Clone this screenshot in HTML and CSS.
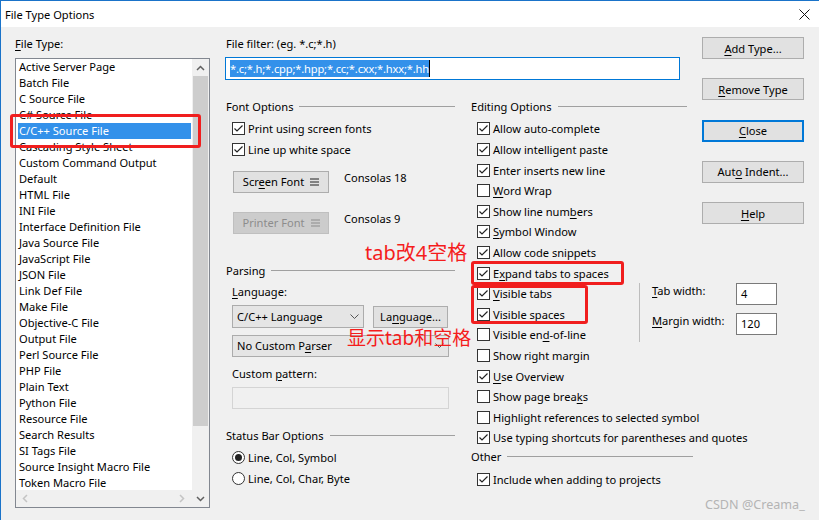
FILE: index.html
```html
<!DOCTYPE html>
<html lang="en">
<head>
    <meta charset="UTF-8">
    <title>File Type Options</title>
    <link rel="stylesheet" href="styles.css">
</head>
<body>

<div class="window">
    <div class="titlebar">
        <span>File Type Options</span>
        <svg class="close-x" width="11" height="11" viewBox="0 0 11 11"><path d="M0.5 0.5L10.5 10.5M10.5 0.5L0.5 10.5" stroke="#111" stroke-width="1"/></svg>
    </div>

    <div class="content">
        <!-- File type list -->
        <div class="types">
            <div class="label"><u>F</u>ile Type:</div>
            <div class="listbox">
                <ul class="items">
                    <li>Active Server Page</li>
                    <li>Batch File</li>
                    <li>C Source File</li>
                    <li>C# Source File</li>
                    <li class="sel">C/C++ Source File</li>
                    <li>Cascading Style Sheet</li>
                    <li>Custom Command Output</li>
                    <li>Default</li>
                    <li>HTML File</li>
                    <li>INI File</li>
                    <li>Interface Definition File</li>
                    <li>Java Source File</li>
                    <li>JavaScript File</li>
                    <li>JSON File</li>
                    <li>Link Def File</li>
                    <li>Make File</li>
                    <li>Objective-C File</li>
                    <li>Output File</li>
                    <li>Perl Source File</li>
                    <li>PHP File</li>
                    <li>Plain Text</li>
                    <li>Python File</li>
                    <li>Resource File</li>
                    <li>Search Results</li>
                    <li>SI Tags File</li>
                    <li>Source Insight Macro File</li>
                    <li>Token Macro File</li>
                </ul>
                <div class="vscroll">
                    <span class="arrow"><svg width="9" height="6" viewBox="0 0 9 6"><path d="M1 5L4.5 1.5L8 5" fill="none" stroke="#606060" stroke-width="1.5"/></svg></span>
                    <span class="thumb"></span>
                    <span class="track"></span>
                    <span class="arrow"><svg width="9" height="6" viewBox="0 0 9 6"><path d="M1 1L4.5 4.5L8 1" fill="none" stroke="#606060" stroke-width="1.5"/></svg></span>
                </div>
                <div class="hscroll">
                    <svg width="6" height="9" viewBox="0 0 6 9"><path d="M5 1L1.5 4.5L5 8" fill="none" stroke="#c4c4c4" stroke-width="1.5"/></svg>
                    <svg width="6" height="9" viewBox="0 0 6 9"><path d="M1 1L4.5 4.5L1 8" fill="none" stroke="#c4c4c4" stroke-width="1.5"/></svg>
                </div>
            </div>
        </div>

        <div class="main">
            <div class="filter">
                <div class="label">File filter: (eg. *.c;*.h)</div>
                <div class="filter-input"><span class="selected">*.c;*.h;*.cpp;*.hpp;*.cc;*.cxx;*.hxx;*.hh</span></div>
            </div>

            <div class="buttons">
                <div class="btn"><span><u>A</u>dd Type...</span></div>
                <div class="btn"><span><u>R</u>emove Type</span></div>
                <div class="btn default"><span><u>C</u>lose</span></div>
                <div class="btn"><span>Aut<u>o</u> Indent...</span></div>
                <div class="btn"><span><u>H</u>elp</span></div>
            </div>

            <!-- Middle column -->
            <div class="col-mid">
                <div class="group">Font Options</div>
                <div class="group-body">
                    <div class="check"><span class="box on"></span>Print using screen fonts</div>
                    <div class="check"><span class="box on"></span>Line up white space</div>
                </div>
                <div class="font-row first">
                    <div class="btn font-btn"><span>Scr<u>e</u>en Font</span><svg width="9" height="8" viewBox="0 0 9 8"><path d="M0 1H9M0 4H9M0 7H9" stroke="#222" stroke-width="1"/></svg></div>
                    <span class="font-name">Consolas 18</span>
                </div>
                <div class="font-row">
                    <div class="btn font-btn disabled"><span>Printer Font</span><svg width="9" height="8" viewBox="0 0 9 8"><path d="M0 1H9M0 4H9M0 7H9" stroke="#8c8c8c" stroke-width="1"/></svg></div>
                    <span class="font-name">Consolas 9</span>
                </div>

                <div class="group parsing">Parsing</div>
                <div class="field-label"><u>L</u>anguage:</div>
                <div class="lang-row">
                    <div class="select lang-select"><span>C/C++ Language</span><svg width="9" height="5" viewBox="0 0 9 5"><path d="M0.5 0.5L4.5 4.5L8.5 0.5" fill="none" stroke="#555" stroke-width="1"/></svg></div>
                    <div class="btn lang-btn"><span>La<u>n</u>guage...</span></div>
                </div>
                <div class="select parser-select"><span>No Custom P<u>a</u>rser</span><svg width="9" height="5" viewBox="0 0 9 5"><path d="M0.5 0.5L4.5 4.5L8.5 0.5" fill="none" stroke="#555" stroke-width="1"/></svg></div>
                <div class="field-label pattern-label">Custom <u>p</u>attern:</div>
                <div class="pattern-input"></div>

                <div class="group status">Status Bar Options</div>
                <div class="radios">
                    <div class="radio"><svg width="13" height="13" viewBox="0 0 13 13"><circle cx="6.5" cy="6.5" r="6" fill="#fff" stroke="#333"/><circle cx="6.5" cy="6.5" r="3.5" fill="#222"/></svg>Line, Col, Symbol</div>
                    <div class="radio"><svg width="13" height="13" viewBox="0 0 13 13"><circle cx="6.5" cy="6.5" r="6" fill="#fff" stroke="#333"/></svg>Line, Col, Char, Byte</div>
                </div>
            </div>

            <!-- Right column -->
            <div class="col-right">
                <div class="group">Editing Options</div>
                <div class="opts">
                    <div class="check"><span class="box on"></span>Allow auto-complete</div>
                    <div class="check"><span class="box on"></span>Allow intelligent paste</div>
                    <div class="check"><span class="box on"></span>Enter inserts new line</div>
                    <div class="check"><span class="box"></span><u>W</u>ord Wrap</div>
                    <div class="check"><span class="box on"></span>Show line num<u>b</u>ers</div>
                    <div class="check"><span class="box on"></span><u>S</u>ymbol Window</div>
                    <div class="check"><span class="box on"></span>Allow code snippets</div>
                    <div class="check"><span class="box on"></span>E<u>x</u>pand tabs to spaces</div>
                    <div class="check narrow"><span class="box on"></span><u>V</u>isible tabs</div>
                    <div class="check narrow"><span class="box on"></span>V<u>i</u>sible spaces</div>
                    <div class="check narrow"><span class="box"></span>Visible en<u>d</u>-of-line</div>
                    <div class="check"><span class="box"></span>Show right margin</div>
                    <div class="check"><span class="box on"></span><u>U</u>se Overview</div>
                    <div class="check"><span class="box"></span>Show page brea<u>k</u>s</div>
                    <div class="check"><span class="box"></span>Highlight references to selected symbol</div>
                    <div class="check"><span class="box on"></span>Use typing shortcuts for parentheses and quotes</div>

                    <div class="widths">
                        <div class="width-row"><span class="width-label"><u>T</u>ab width:</span><span class="num-input">4</span></div>
                        <div class="width-row"><span class="width-label"><u>M</u>argin width:</span><span class="num-input">120</span></div>
                    </div>
                </div>
                <div class="group other">Other</div>
                <div class="check include"><span class="box on"></span>Include when adding to projects</div>
            </div>
        </div>
    </div>

    <!-- Annotations drawn over the screenshot -->
    <div class="mark mark-list"></div>
    <div class="mark mark-expand"></div>
    <div class="mark mark-visible"></div>
    <div class="note note-tab">tab改4空格</div>
    <div class="note note-show">显示tab和空格</div>
    <div class="watermark">CSDN @Creama_</div>
</div>

</body>
</html>
```

FILE: styles.css
```css
* {
    box-sizing: border-box;
}

body {
    margin: 0;
    background: #f0f0f0;
    font-family: "Noto Sans", Arial, sans-serif;
    font-size: 11.1px;
    color: #000;
}

u {
    text-decoration-thickness: 1px;
    text-underline-offset: 2px;
}

.window {
    position: relative;
    width: 819px;
    height: 520px;
    border-left: 1px solid #1a73c9;
    overflow: hidden;
}

.titlebar {
    height: 27px;
    background: #fff;
    border-top: 1px solid #1a73c9;
    display: flex;
    align-items: center;
    justify-content: space-between;
    padding: 0 9px 0 4px;
}

.content {
    display: flex;
    align-items: flex-start;
    padding-left: 14px;
}

.label {
    height: 16px;
    line-height: 16px;
    white-space: nowrap;
}

/* List of file types */
.types {
    width: 195px;
    padding-top: 9px;
}

.listbox {
    margin-top: 6px;
    height: 450px;
    border: 1px solid #828790;
    background: #fff;
    display: grid;
    grid-template-columns: 1fr 17px;
    grid-template-rows: 1fr 17px;
}

.items {
    margin: 0;
    padding: 0;
    list-style: none;
    overflow: hidden;
}

.items li {
    height: 16px;
    line-height: 16px;
    margin: 0 1px 0 2px;
    padding-left: 1px;
    white-space: nowrap;
}

.items li.sel {
    background: #3391ea;
    color: #fff;
}

.vscroll {
    grid-column: 2;
    grid-row: 1 / 3;
    background: #f0f0f0;
    display: flex;
    flex-direction: column;
}

.vscroll .arrow {
    height: 17px;
    display: flex;
    align-items: center;
    justify-content: center;
}

.vscroll .thumb {
    height: 350px;
    margin: 0 1px;
    background: #cdcdcd;
}

.vscroll .track {
    flex: 1;
}

.hscroll {
    grid-column: 1;
    grid-row: 2;
    background: #f0f0f0;
    display: flex;
    align-items: center;
    justify-content: space-between;
    padding: 0 7px 0 6px;
}

/* Main area */
.main {
    margin-left: 15px;
    display: grid;
    grid-template-columns: 230px 217px 102px;
    column-gap: 15px;
    align-items: start;
    align-content: start;
}

.filter {
    grid-column: 1 / 3;
    grid-row: 1;
    padding-top: 9px;
}

.filter .label {
    padding-left: 1px;
}

.filter-input {
    margin-top: 5px;
    width: 455px;
    height: 23px;
    border: 1px solid #0078d7;
    background: #fff;
    padding: 2px 0 0 4px;
}

.filter-input .selected {
    display: inline-block;
    height: 17px;
    line-height: 17px;
    background: #3391ea;
    color: #fff;
    border-right: 1px solid #000;
    letter-spacing: -0.15px;
}

.buttons {
    grid-column: 3;
    grid-row: 1 / 3;
    padding-top: 10px;
    display: flex;
    flex-direction: column;
    gap: 19.3px;
}

.btn {
    height: 22px;
    background: #e1e1e1;
    border: 1px solid #adadad;
    display: flex;
    align-items: center;
    justify-content: center;
    white-space: nowrap;
}

.btn.default {
    border: 2px solid #0078d7;
}

.col-mid,
.col-right {
    grid-row: 2;
    padding-top: 18px;
}

.col-mid {
    grid-column: 1;
}

.col-right {
    grid-column: 2;
}

.group {
    display: flex;
    align-items: center;
    height: 16px;
    padding-left: 1px;
    margin-bottom: 4.7px;
    white-space: nowrap;
}

.group::after {
    content: "";
    flex: 1;
    border-top: 1px solid #a0a0a0;
    margin-left: 6px;
}

.check,
.radio {
    display: flex;
    align-items: center;
    height: 20.6px;
    padding-left: 7px;
    white-space: nowrap;
}

.box {
    width: 13px;
    height: 13px;
    margin-right: 3px;
    border: 1px solid #333;
    background: #fff;
    flex: none;
}

.box.on {
    background: #fff url("data:image/svg+xml,%3Csvg xmlns='http://www.w3.org/2000/svg' width='11' height='11' viewBox='0 0 11 11'%3E%3Cpath d='M1.5 5.5L4 8L9.5 2.5' fill='none' stroke='%23222' stroke-width='1.2'/%3E%3C/svg%3E") no-repeat center;
}

.radio svg {
    margin-right: 3px;
}

.radios {
    margin-top: -0.7px;
}

.radio {
    height: 21px;
}

/* Font buttons */
.font-row {
    display: flex;
    align-items: flex-start;
    margin-top: 19px;
}

.font-row.first {
    margin-top: 11px;
}

.font-btn {
    width: 96px;
    margin-left: 8px;
    gap: 6px;
}

.font-btn.disabled {
    background: #cccccc;
    border-color: #bfbfbf;
    color: #8c8c8c;
}

.font-name {
    margin-left: 15px;
    line-height: 14px;
}

.parsing {
    margin-top: 29px;
    margin-bottom: 0;
}

.field-label {
    height: 16px;
    line-height: 16px;
    margin-top: 5px;
    padding-left: 7px;
}

.lang-row {
    display: flex;
    align-items: flex-start;
    margin-top: 5px;
}

.select {
    display: flex;
    align-items: center;
    justify-content: space-between;
    background: #e5e5e5;
    border: 1px solid #acacac;
    padding: 0 4px 0 4px;
    margin-left: 7px;
    white-space: nowrap;
}

.lang-select {
    width: 132px;
    height: 23px;
}

.lang-btn {
    width: 75px;
    margin: 1px 0 0 9px;
}

.parser-select {
    width: 217px;
    height: 22px;
    margin-top: 7px;
}

.pattern-label {
    margin-top: 9px;
}

.pattern-input {
    width: 217px;
    height: 22px;
    margin: 5px 0 0 7px;
    border: 1px solid #d4d4d4;
    background: #f0f0f0;
}

.status {
    margin-top: 19px;
    margin-bottom: 4px;
}

/* Editing options grid */
.opts {
    display: grid;
    grid-template-columns: 169px 150px;
    grid-auto-rows: 20.6px;
}

.opts .check {
    grid-column: 1 / -1;
}

.opts .check.narrow {
    grid-column: 1;
}

.widths {
    grid-column: 2;
    grid-row: 9 / span 3;
    height: 59px;
    border-left: 1px solid #bdbdbd;
    padding-left: 12px;
    display: flex;
    flex-direction: column;
    gap: 8px;
}

.width-row {
    display: flex;
    align-items: flex-start;
}

.width-label {
    width: 84px;
    line-height: 16px;
    white-space: nowrap;
}

.num-input {
    width: 41px;
    height: 22px;
    line-height: 20px;
    border: 1px solid #7a7a7a;
    background: #fff;
    padding-left: 4px;
}

.other {
    margin-bottom: 0;
    margin-right: -6px;
}

.include {
    margin-top: 5px;
}

/* Red annotations */
.mark {
    position: absolute;
    border: 3px solid #f01e1e;
    border-radius: 3px;
}

.mark-list {
    left: 9px;
    top: 114px;
    width: 191px;
    height: 34px;
}

.mark-expand {
    left: 470px;
    top: 261px;
    width: 153px;
    height: 24px;
}

.mark-visible {
    left: 470px;
    top: 285px;
    width: 117px;
    height: 39px;
}

.note {
    position: absolute;
    color: #f51d1d;
    font-family: "Noto Sans", "Noto Sans CJK SC", sans-serif;
    font-size: 19px;
    line-height: 20px;
    white-space: nowrap;
}

.note-tab {
    left: 364px;
    top: 243px;
    font-size: 20px;
}

.note-show {
    left: 346px;
    top: 328px;
}

.watermark {
    position: absolute;
    left: 704px;
    top: 497px;
    font-size: 12.6px;
    line-height: 16px;
    color: #b4b4b4;
}
```
